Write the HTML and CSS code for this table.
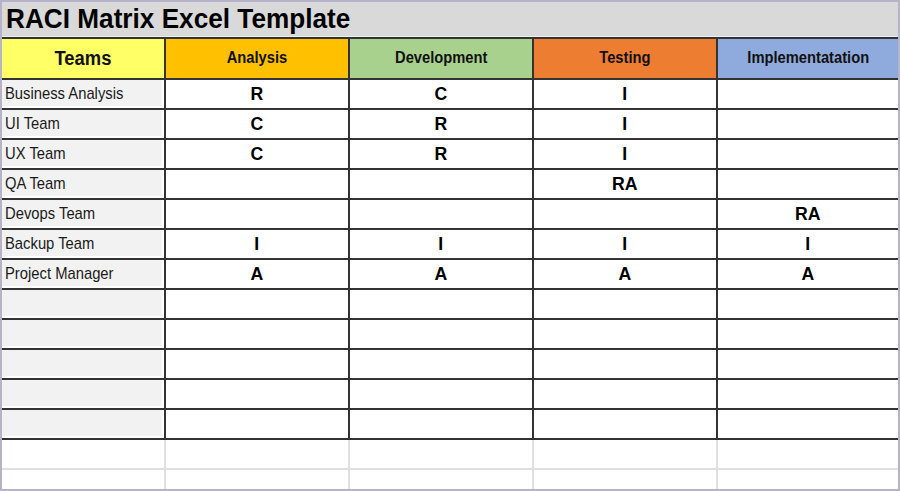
FILE: index.html
```html
<!DOCTYPE html>
<html>
<head>
<meta charset="utf-8">
<link rel="stylesheet" href="styles.css">
</head>
<body>
<div class="frame">
  <div class="title"><span class="t">RACI Matrix Excel Template</span></div>
  <table class="raci">
    <colgroup>
      <col class="c-team"><col class="c-role"><col class="c-role"><col class="c-role"><col>
    </colgroup>
    <thead>
      <tr class="head">
        <th class="h-teams"><span class="t">Teams</span></th>
        <th class="h-analysis"><span class="t">Analysis</span></th>
        <th class="h-dev"><span class="t">Development</span></th>
        <th class="h-test"><span class="t">Testing</span></th>
        <th class="h-impl"><span class="t">Implementatation</span></th>
      </tr>
    </thead>
    <tbody>
      <tr><td class="team"><span class="t">Business Analysis</span></td><td><span class="t">R</span></td><td><span class="t">C</span></td><td><span class="t">I</span></td><td></td></tr>
      <tr><td class="team"><span class="t">UI Team</span></td><td><span class="t">C</span></td><td><span class="t">R</span></td><td><span class="t">I</span></td><td></td></tr>
      <tr><td class="team"><span class="t">UX Team</span></td><td><span class="t">C</span></td><td><span class="t">R</span></td><td><span class="t">I</span></td><td></td></tr>
      <tr><td class="team"><span class="t">QA Team</span></td><td></td><td></td><td><span class="t">RA</span></td><td></td></tr>
      <tr><td class="team"><span class="t">Devops Team</span></td><td></td><td></td><td></td><td><span class="t">RA</span></td></tr>
      <tr><td class="team"><span class="t">Backup Team</span></td><td><span class="t">I</span></td><td><span class="t">I</span></td><td><span class="t">I</span></td><td><span class="t">I</span></td></tr>
      <tr><td class="team"><span class="t">Project Manager</span></td><td><span class="t">A</span></td><td><span class="t">A</span></td><td><span class="t">A</span></td><td><span class="t">A</span></td></tr>
      <tr><td class="team"></td><td></td><td></td><td></td><td></td></tr>
      <tr><td class="team"></td><td></td><td></td><td></td><td></td></tr>
      <tr><td class="team"></td><td></td><td></td><td></td><td></td></tr>
      <tr><td class="team"></td><td></td><td></td><td></td><td></td></tr>
      <tr><td class="team"></td><td></td><td></td><td></td><td></td></tr>
      <tr class="blank"><td></td><td></td><td></td><td></td><td></td></tr>
      <tr class="blank"><td></td><td></td><td></td><td></td><td></td></tr>
    </tbody>
  </table>
</div>
</body>
</html>
```

FILE: styles.css
```css
html, body {
  margin: 0;
  padding: 0;
  background: #ffffff;
}

.frame {
  width: 900px;
  height: 491px;
  box-sizing: border-box;
  border: 2px solid #b6b2c8;
  overflow: hidden;
  background: #ffffff;
  font-family: "Liberation Sans", Arial, sans-serif;
}

.t {
  display: inline-block;
  transform-origin: center center;
}

.title {
  height: 34px;
  background: #d9d9d9;
  border-bottom: 1px solid #eeeeee;
  font-size: 28px;
  font-weight: bold;
  color: #000;
  line-height: 34px;
  padding-left: 4px;
}
.title .t {
  transform: scaleX(0.935);
  transform-origin: left center;
}

.raci {
  width: 896px;
  border-collapse: collapse;
  table-layout: fixed;
}

.c-team { width: 163px; }
.c-role { width: 184px; }

.raci th,
.raci td {
  border: 2px solid #333333;
  padding: 0;
  text-align: center;
  vertical-align: middle;
  overflow: hidden;
  white-space: nowrap;
  line-height: 1;
}

.raci tr > :first-child { border-left: none; }
.raci tr > :last-child { border-right: none; }

.head th {
  height: 37px;
  padding-bottom: 2px;
  font-size: 16px;
  font-weight: bold;
  color: #111;
}
.head th .t { transform: scaleX(0.92); }

.head .h-teams {
  font-size: 20px;
  background: #ffff66;
}
.h-analysis { background: #ffc000; }
.h-dev { background: #a9d18e; }
.h-test { background: #ed7d31; }
.h-impl { background: #8faadc; }

.raci tbody td {
  height: 26px;
  padding-bottom: 2px;
  font-size: 19px;
  font-weight: bold;
  color: #000;
}
.raci tbody td .t { transform: scaleX(0.93); }

.raci tbody td.team {
  text-align: left;
  padding-left: 3px;
  font-size: 17px;
  font-weight: normal;
  color: #1a1a1a;
  background: #f2f2f2;
  box-shadow: inset -2px -2px 0 #ffffff;
}
.raci tbody td.team .t {
  transform: scaleX(0.87);
  transform-origin: left center;
}

.raci tbody tr.blank td {
  border-color: #e0e0e0;
  background: #ffffff;
}
.raci tbody tr:nth-last-child(2) td {
  border-top-color: #333333;
}
```
